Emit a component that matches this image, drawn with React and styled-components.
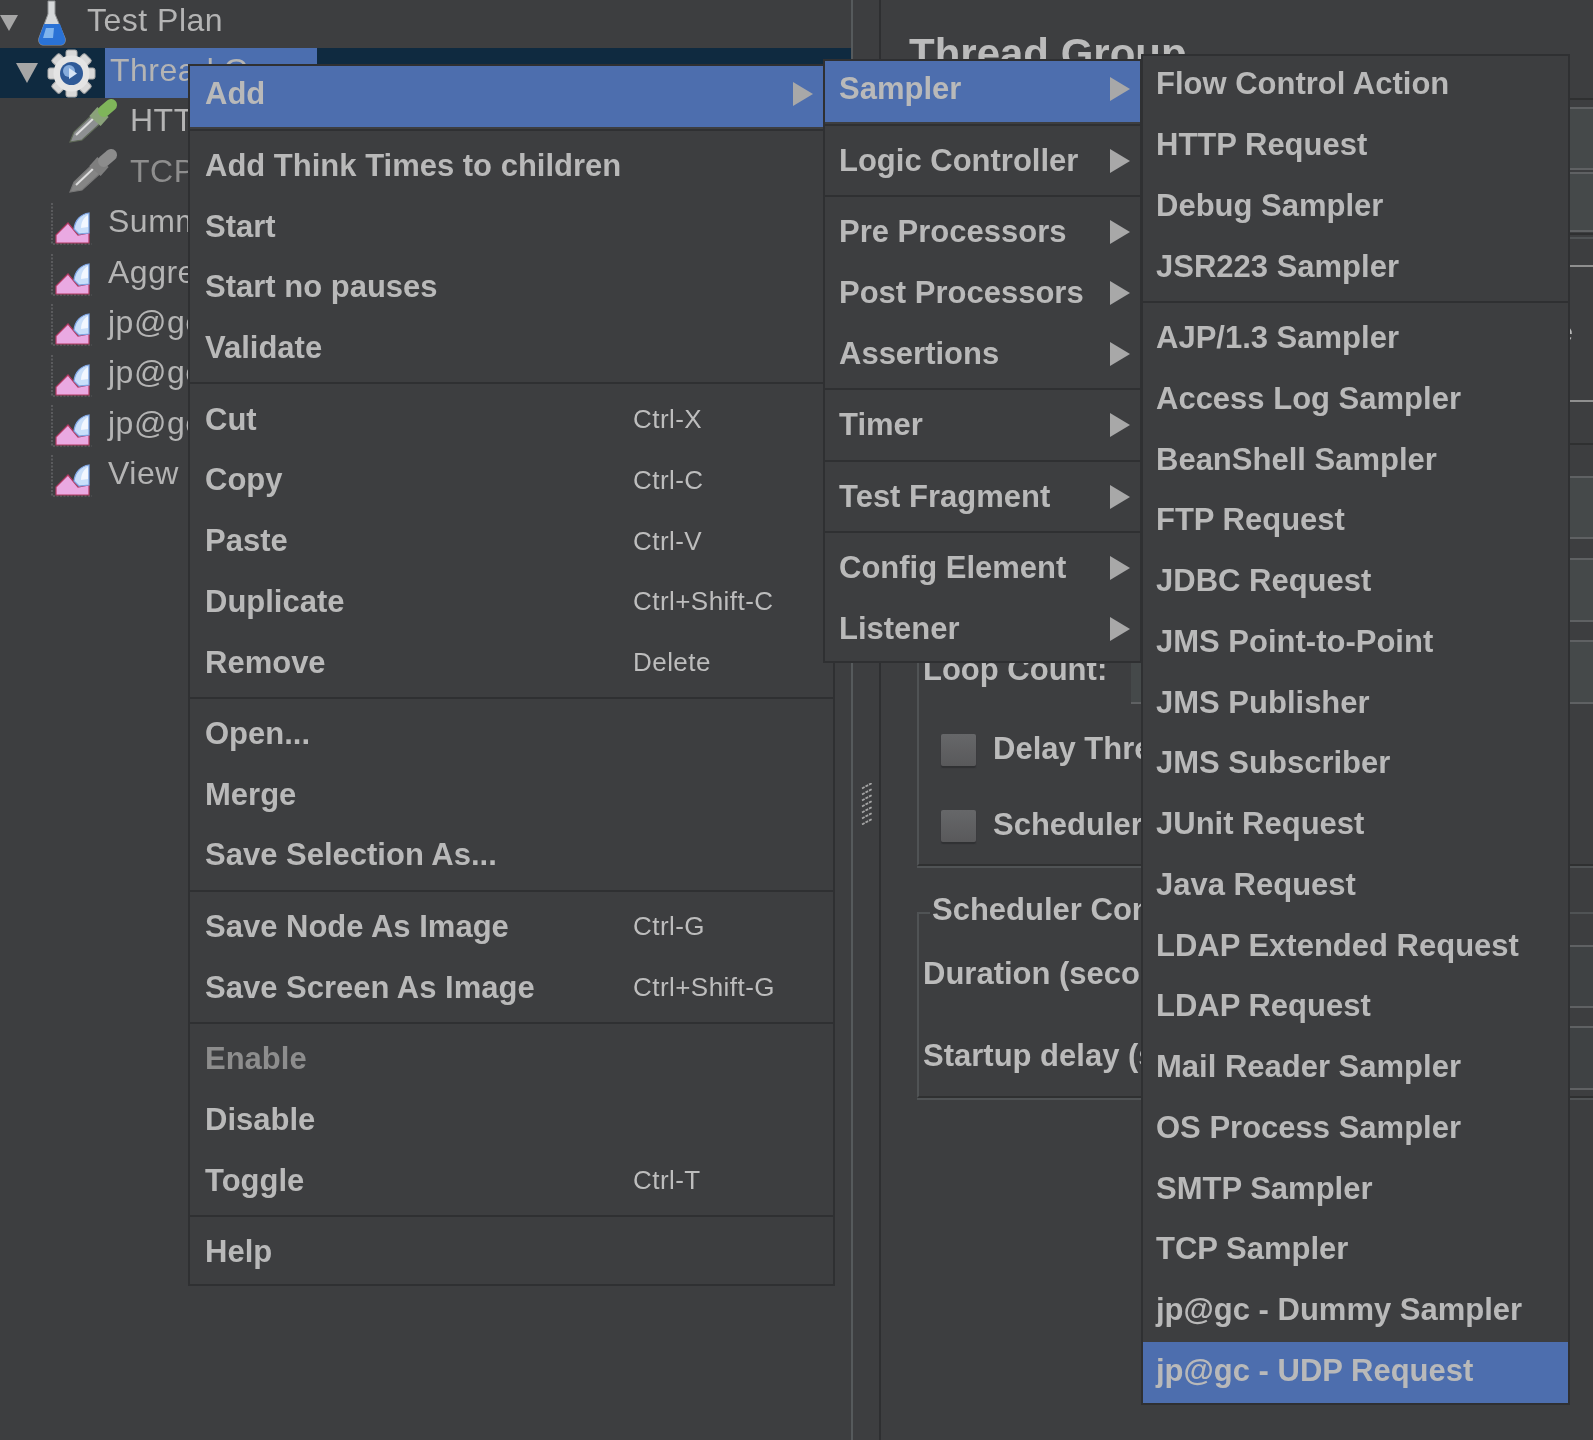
import React from 'react';
import styled, { createGlobalStyle } from 'styled-components';

const GlobalStyle = createGlobalStyle`
    html, body {
        margin: 0;
        padding: 0;
        background: #3d3e40;
    }
    body {
        overflow: hidden;
        font-family: "Liberation Sans", Arial, sans-serif;
    }
`;

const Screen = styled.div`
    position: relative;
    display: flex;
    width: 1593px;
    height: 1440px;
    overflow: hidden;
    background: #3d3e40;
    color: #bbbbbb;
    filter: blur(0.7px);
`;

/* ---------- tree ---------- */

const TreePane = styled.div`
    width: 851px;
    flex-shrink: 0;
    margin-top: -2.4px;
    font-size: 32px;
`;

const TreeRow = styled.div`
    display: flex;
    align-items: center;
    height: 50.4px;
    padding-left: ${(p) => p.$indent}px;
    background: ${(p) => (p.$selected ? '#0f2a40' : 'transparent')};
    white-space: nowrap;
`;

const Expander = styled.span`
    flex-shrink: 0;
    width: 0;
    height: 0;
    margin-right: ${(p) => p.$gap}px;
    border-left: ${(p) => p.$size}px solid transparent;
    border-right: ${(p) => p.$size}px solid transparent;
    border-top: ${(p) => p.$size * 1.8}px solid #a6a6a6;
`;

const IconSlot = styled.span`
    display: flex;
    flex-shrink: 0;
    margin-right: ${(p) => p.$gap}px;
    margin-top: ${(p) => p.$lift || 0}px;
`;

const TreeLabel = styled.span`
    display: block;
    flex-shrink: 0;
    box-sizing: border-box;
    height: 100%;
    padding: 0 0 6px ${(p) => (p.$selected ? 5 : 0)}px;
    width: ${(p) => (p.$selected ? '212px' : 'auto')};
    line-height: 44px;
    letter-spacing: 0.5px;
    color: ${(p) => (p.$muted ? '#8e8e8e' : '#b4b4b4')};
    background: ${(p) => (p.$selected ? '#4b6eaf' : 'transparent')};
`;

const FlaskIcon = () => (
    <svg width="30" height="46" viewBox="0 0 30 46">
        <path d="M11 1h7v13l10 24c1 4-1 7-4 7H6c-3 0-5-3-4-7l9-24z" fill="#d6d8da" stroke="#8f9193" strokeWidth="1" />
        <path d="M7 24h16l5 14c1 4-1 7-4 7H6c-3 0-5-3-4-7z" fill="#2a72d6" />
        <path d="M9 28h8l-1 10H6z" fill="#7fb4ee" />
    </svg>
);

const GearIcon = () => (
    <svg width="49" height="49" viewBox="0 0 49 49">
        <g fill="#d8d8d8" stroke="#a9a9a9" strokeWidth="1">
            <rect x="19" y="1" width="11" height="47" rx="2" />
            <rect x="19" y="1" width="11" height="47" rx="2" transform="rotate(45 24.5 24.5)" />
            <rect x="19" y="1" width="11" height="47" rx="2" transform="rotate(90 24.5 24.5)" />
            <rect x="19" y="1" width="11" height="47" rx="2" transform="rotate(135 24.5 24.5)" />
        </g>
        <circle cx="24.5" cy="24.5" r="18" fill="#e4e4e4" />
        <circle cx="24.5" cy="24.5" r="11.5" fill="#2f5a98" />
        <circle cx="22" cy="22" r="6" fill="#86acdc" />
        <path d="M22 19l8 5.5-8 5.5z" fill="#d6e4f6" />
    </svg>
);

const DropperIcon = ({ bulb, collar, stem, edge }) => (
    <svg width="50" height="46" viewBox="0 0 50 46">
        <path d="M2 43L6 33 27 13l9 8L14 41z" fill={stem} stroke={edge} strokeWidth="1.2" />
        <path d="M8 36L27 18" stroke="#dedede" strokeWidth="2" />
        <path d="M27 22L35 13" stroke={collar} strokeWidth="15" />
        <path d="M36 12L43 6" stroke={bulb} strokeWidth="12" strokeLinecap="round" />
    </svg>
);

const ChartIcon = () => (
    <svg width="42" height="44" viewBox="0 0 42 44">
        <path d="M1 1v41h40" fill="none" stroke="#6f7072" strokeWidth="1.2" strokeDasharray="2 1.5" />
        <path d="M5 41V33l12-12 10 12 11-2v10z" fill="#eaa9e2" stroke="#b23a63" strokeWidth="1.2" />
        <path d="M23 27C24 18 30 12 38 11V31L28 32z" fill="#c9dffa" stroke="#7fa6e6" strokeWidth="1.2" />
        <path d="M37 13c-4 2-7 7-7 13l7-1z" fill="#f2f7ff" />
    </svg>
);

/* ---------- split bar ---------- */

const SplitBar = styled.div`
    box-sizing: border-box;
    display: flex;
    justify-content: center;
    align-items: flex-start;
    flex-shrink: 0;
    width: 30px;
    padding: 783px 0 0 2px;
    border-left: 2px solid #565a5c;
    border-right: 2px solid #2e2f31;
`;

const Grip = () => (
    <svg width="12" height="42" viewBox="0 0 12 42">
        {[0, 6, 12, 18, 24, 30, 36].map((y) => (
            <path key={y} d={`M1 ${y + 5.5}L11 ${y}`} stroke="#a4a4a4" strokeWidth="1.8" strokeDasharray="3 1" />
        ))}
    </svg>
);

/* ---------- form on the right ---------- */

const ContentPane = styled.div`
    flex: 1;
    min-width: 0;
    font-size: 31px;
    font-weight: bold;
`;

const PanelTitle = styled.div`
    box-sizing: border-box;
    height: 100px;
    padding: 30px 0 0 28px;
    font-size: 42px;
    line-height: 48px;
    white-space: nowrap;
    border-bottom: 2px solid #2f3031;
`;

const HeaderFields = styled.div`
    padding-top: 7px;
    height: 135px;
    box-sizing: border-box;
    border-bottom: 2px solid #2f3031;
`;

const TextField = styled.div`
    box-sizing: border-box;
    height: ${(p) => p.$h}px;
    margin-top: ${(p) => p.$top || 0}px;
    flex: 1;
    background: ${(p) => (p.$dim ? '#3f4244' : '#45494a')};
    border-top: 2px solid #5f6163;
    border-bottom: 2px solid #5f6163;
`;

const ActionGroup = styled.div`
    box-sizing: border-box;
    height: 206px;
    padding-top: 26px;
    margin-top: 2px;
    border-top: 2px solid #505355;
`;

const ActionBox = styled.div`
    display: flex;
    align-items: center;
    justify-content: flex-end;
    box-sizing: border-box;
    height: 137px;
    padding: 0 20px 2px 0;
    border-top: 2px solid #8f8f8f;
    border-bottom: 2px solid #8f8f8f;
    font-weight: normal;
    font-size: 26px;
`;

const Group = styled.div`
    position: relative;
    box-sizing: border-box;
    height: ${(p) => p.$h}px;
    margin: ${(p) => p.$top}px 0 0 36px;
    padding-top: ${(p) => p.$pad}px;
    border-top: 2px solid ${(p) => (p.$soft ? '#505355' : '#2f3031')};
    border-left: 2px solid #505355;
    border-bottom: 2px solid #2f3031;
    box-shadow: 0 2px 0 #505355;
`;

const Legend = styled.span`
    position: absolute;
    top: -22px;
    left: 11px;
    padding: 0 2px;
    line-height: 36px;
    white-space: nowrap;
    background: #3d3e40;
`;

const FieldRow = styled.div`
    display: flex;
    align-items: stretch;
    margin-top: ${(p) => p.$top || 0}px;
    white-space: nowrap;
`;

const FieldLabel = styled.span`
    flex-shrink: 0;
    box-sizing: border-box;
    width: ${(p) => p.$w}px;
    height: ${(p) => p.$h}px;
    padding-left: 4px;
    line-height: ${(p) => p.$h - 5}px;
`;

const CheckRow = styled.div`
    display: flex;
    align-items: center;
    gap: 17px;
    height: 32px;
    margin: ${(p) => p.$top}px 0 0 22px;
    white-space: nowrap;
`;

const CheckBox = styled.span`
    flex-shrink: 0;
    box-sizing: border-box;
    width: 35px;
    height: 32px;
    border-radius: 2px;
    background: linear-gradient(#666769, #59595b);
    box-shadow: 0 2px 1px #303133;
`;

const CheckText = styled.span`
    padding-bottom: 2px;
`;

/* ---------- popup menus ---------- */

const Menu = styled.div`
    position: absolute;
    top: ${(p) => p.$top}px;
    left: ${(p) => p.$left}px;
    z-index: ${(p) => p.$layer};
    box-sizing: border-box;
    width: ${(p) => p.$width}px;
    background: #3d3e40;
    border: 2px solid #2f3032;
    font-size: 31px;
    font-weight: bold;
    white-space: nowrap;
`;

const MenuRow = styled.div`
    display: flex;
    align-items: center;
    box-sizing: border-box;
    height: 60.75px;
    padding: 0 ${(p) => p.$arrowPad || 0}px 4px ${(p) => p.$pad}px;
    color: ${(p) => (p.$disabled ? '#8d8d8d' : '#b9b9b9')};
    background: ${(p) => (p.$active ? '#4d6eae' : 'transparent')};
`;

const ItemLabel = styled.span`
    flex-shrink: 0;
    width: ${(p) => (p.$fixed ? '428px' : 'auto')};
`;

const Shortcut = styled.span`
    font-size: 26px;
    font-weight: normal;
    letter-spacing: 0.45px;
    color: #bdbdbd;
`;

const SubArrow = styled.span`
    flex-shrink: 0;
    margin-left: auto;
    width: 0;
    height: 0;
    border-left: 20px solid #a8a8a8;
    border-top: 12px solid transparent;
    border-bottom: 12px solid transparent;
`;

const MenuSeparator = styled.div`
    box-sizing: border-box;
    height: 10.7px;
    padding-top: 2px;

    &::before {
        content: '';
        display: block;
        height: 2px;
        background: #2f3032;
    }
`;

const mainItems = [
    [{ label: 'Add', active: true, arrow: true }],
    [
        { label: 'Add Think Times to children' },
        { label: 'Start' },
        { label: 'Start no pauses' },
        { label: 'Validate' },
    ],
    [
        { label: 'Cut', key: 'Ctrl-X' },
        { label: 'Copy', key: 'Ctrl-C' },
        { label: 'Paste', key: 'Ctrl-V' },
        { label: 'Duplicate', key: 'Ctrl+Shift-C' },
        { label: 'Remove', key: 'Delete' },
    ],
    [{ label: 'Open...' }, { label: 'Merge' }, { label: 'Save Selection As...' }],
    [
        { label: 'Save Node As Image', key: 'Ctrl-G' },
        { label: 'Save Screen As Image', key: 'Ctrl+Shift-G' },
    ],
    [{ label: 'Enable', disabled: true }, { label: 'Disable' }, { label: 'Toggle', key: 'Ctrl-T' }],
    [{ label: 'Help' }],
];

const addItems = [
    [{ label: 'Sampler', active: true, arrow: true }],
    [{ label: 'Logic Controller', arrow: true }],
    [
        { label: 'Pre Processors', arrow: true },
        { label: 'Post Processors', arrow: true },
        { label: 'Assertions', arrow: true },
    ],
    [{ label: 'Timer', arrow: true }],
    [{ label: 'Test Fragment', arrow: true }],
    [{ label: 'Config Element', arrow: true }, { label: 'Listener', arrow: true }],
];

const samplerItems = [
    [
        { label: 'Flow Control Action' },
        { label: 'HTTP Request' },
        { label: 'Debug Sampler' },
        { label: 'JSR223 Sampler' },
    ],
    [
        { label: 'AJP/1.3 Sampler' },
        { label: 'Access Log Sampler' },
        { label: 'BeanShell Sampler' },
        { label: 'FTP Request' },
        { label: 'JDBC Request' },
        { label: 'JMS Point-to-Point' },
        { label: 'JMS Publisher' },
        { label: 'JMS Subscriber' },
        { label: 'JUnit Request' },
        { label: 'Java Request' },
        { label: 'LDAP Extended Request' },
        { label: 'LDAP Request' },
        { label: 'Mail Reader Sampler' },
        { label: 'OS Process Sampler' },
        { label: 'SMTP Sampler' },
        { label: 'TCP Sampler' },
        { label: 'jp@gc - Dummy Sampler' },
        { label: 'jp@gc - UDP Request', active: true },
    ],
];

const PopupMenu = ({ groups, top, left, width, layer, pad, arrowPad, hasKeys }) => (
    <Menu $top={top} $left={left} $width={width} $layer={layer}>
        {groups.map((group, i) => (
            <React.Fragment key={i}>
                {i > 0 && <MenuSeparator />}
                {group.map((item) => (
                    <MenuRow
                        key={item.label}
                        $pad={pad}
                        $arrowPad={arrowPad}
                        $active={item.active}
                        $disabled={item.disabled}
                    >
                        <ItemLabel $fixed={hasKeys && !item.arrow}>{item.label}</ItemLabel>
                        {item.key && <Shortcut>{item.key}</Shortcut>}
                        {item.arrow && <SubArrow />}
                    </MenuRow>
                ))}
            </React.Fragment>
        ))}
    </Menu>
);

const listeners = [
    'Summary Report',
    'Aggregate Report',
    'jp@gc - Response Times Over Time',
    'jp@gc - Transactions per Second',
    'jp@gc - Active Threads Over Time',
    'View Results Tree',
];

const App = () => {
    return (
        <Screen>
            <GlobalStyle />
            <TreePane>
                <TreeRow $indent={0}>
                    <Expander $size={9} $gap={19} />
                    <IconSlot $gap={20}><FlaskIcon /></IconSlot>
                    <TreeLabel>Test Plan</TreeLabel>
                </TreeRow>
                <TreeRow $indent={16} $selected>
                    <Expander $size={11.5} $gap={9} />
                    <IconSlot $gap={9}><GearIcon /></IconSlot>
                    <TreeLabel $selected>Thread Group</TreeLabel>
                </TreeRow>
                <TreeRow $indent={68}>
                    <IconSlot $gap={12} $lift={-4}>
                        <DropperIcon bulb="#7fb55a" collar="#8aa27a" stem="#8d8f91" edge="#5f6a58" />
                    </IconSlot>
                    <TreeLabel>HTTP Request</TreeLabel>
                </TreeRow>
                <TreeRow $indent={68}>
                    <IconSlot $gap={12} $lift={-3}>
                        <DropperIcon bulb="#8c8c8c" collar="#7e7e7e" stem="#858585" edge="#777777" />
                    </IconSlot>
                    <TreeLabel $muted>TCP Sampler</TreeLabel>
                </TreeRow>
                {listeners.map((name) => (
                    <TreeRow key={name} $indent={51}>
                        <IconSlot $gap={15}><ChartIcon /></IconSlot>
                        <TreeLabel>{name}</TreeLabel>
                    </TreeRow>
                ))}
            </TreePane>

            <SplitBar>
                <Grip />
            </SplitBar>

            <ContentPane>
                <PanelTitle>Thread Group</PanelTitle>
                <HeaderFields>
                    <TextField $h={63} />
                    <TextField $h={60} $top={2} />
                </HeaderFields>
                <ActionGroup>
                    <ActionBox>Continue</ActionBox>
                </ActionGroup>
                <Group $top={0} $h={423} $pad={31}>
                    <Legend>Thread Properties</Legend>
                    <FieldRow>
                        <FieldLabel $w={212} $h={63}>Number of Threads (users):</FieldLabel>
                        <TextField $h={63} />
                    </FieldRow>
                    <FieldRow $top={19}>
                        <FieldLabel $w={212} $h={64}>Ramp-up period (seconds):</FieldLabel>
                        <TextField $h={64} />
                    </FieldRow>
                    <FieldRow $top={18}>
                        <FieldLabel $w={212} $h={64}>Loop Count:</FieldLabel>
                        <TextField $h={64} />
                    </FieldRow>
                    <CheckRow $top={30}>
                        <CheckBox />
                        <CheckText>Delay Thread creation until needed</CheckText>
                    </CheckRow>
                    <CheckRow $top={44}>
                        <CheckBox />
                        <CheckText>Scheduler</CheckText>
                    </CheckRow>
                </Group>
                <Group $top={46} $h={186} $pad={31} $soft>
                    <Legend>Scheduler Configuration</Legend>
                    <FieldRow>
                        <FieldLabel $w={340} $h={63}>Duration (seconds)</FieldLabel>
                        <TextField $h={63} $dim />
                    </FieldRow>
                    <FieldRow $top={18}>
                        <FieldLabel $w={340} $h={64}>Startup delay (seconds)</FieldLabel>
                        <TextField $h={64} $dim />
                    </FieldRow>
                </Group>
            </ContentPane>

            <PopupMenu groups={mainItems} top={64} left={188} width={647} layer={1} pad={15} arrowPad={20} hasKeys />
            <PopupMenu groups={addItems} top={59} left={823} width={319} layer={2} pad={14} arrowPad={10} />
            <PopupMenu groups={samplerItems} top={54} left={1141} width={429} layer={3} pad={13} />
        </Screen>
    );
};

export default App;
